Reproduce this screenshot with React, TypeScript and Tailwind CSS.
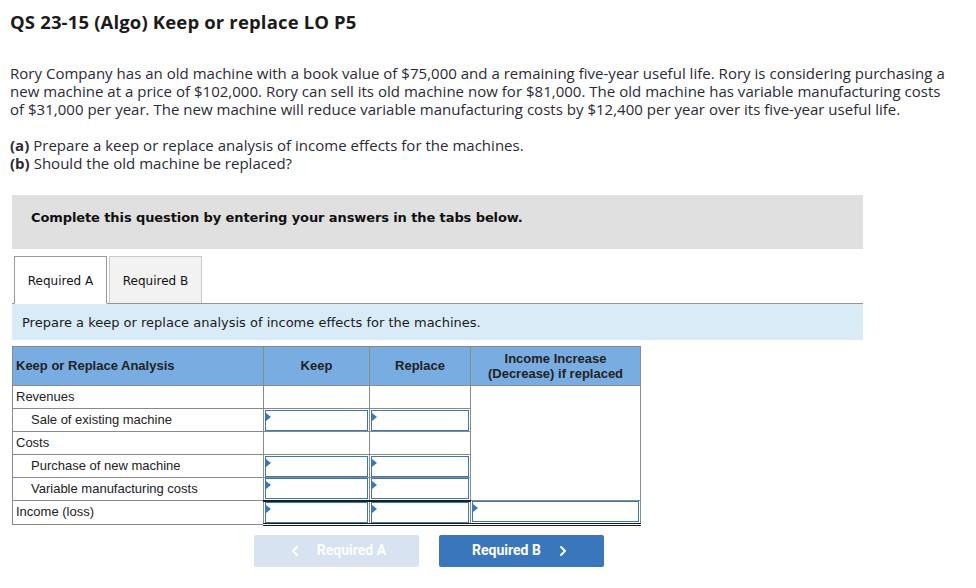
import React from 'react';
import { ChevronLeft, ChevronRight } from 'lucide-react';

function InputBox({ bottom }: { bottom?: 'single' | 'double' }) {
  const edge =
    bottom === 'single'
      ? 'border-b-2 border-b-[#1d1d1d]'
      : bottom === 'double'
      ? 'border-b-[3px] border-b-[#1d1d1d] border-double'
      : '';
  return (
    <td className={`p-0 border border-[#8a8a8a] h-[23px] ${edge}`}>
      <div className="relative h-[21px] mx-px border border-[#3b76ba] bg-white">
        <span className="absolute left-0 top-[2px] w-0 h-0 border-y-[4px] border-y-transparent border-l-[5px] border-l-[#3b76ba]" />
      </div>
    </td>
  );
}

export default function App() {
  const rows = [
    { label: 'Revenues', indent: false, input: false },
    { label: 'Sale of existing machine', indent: true, input: true },
    { label: 'Costs', indent: false, input: false },
    { label: 'Purchase of new machine', indent: true, input: true },
    { label: 'Variable manufacturing costs', indent: true, input: true, single: true },
  ];

  return (
    <div className="w-[976px] h-[588px] bg-white text-[#222] overflow-hidden">
      {/* Heading */}
      <h1 className="pl-[10px] pt-[11px] text-[18.5px] tracking-[0.15px] font-bold leading-[22px] text-[#1b1b1b] font-['Open_Sans',sans-serif]">
        QS 23-15 (Algo) Keep or replace LO P5
      </h1>

      {/* Problem text */}
      <div className="pl-[10px] pt-[31px] text-[15px] tracking-[0.02px] leading-[18px] text-[#2b2b35] font-['Open_Sans',sans-serif] whitespace-nowrap">
        <p>
          Rory Company has an old machine with a book value of $75,000 and a remaining five-year useful life. Rory is considering purchasing a
          <br />
          new machine at a price of $102,000. Rory can sell its old machine now for $81,000. The old machine has variable manufacturing costs
          <br />
          of $31,000 per year. The new machine will reduce variable manufacturing costs by $12,400 per year over its five-year useful life.
        </p>
        <p className="mt-[18px]">
          <b>(a)</b> Prepare a keep or replace analysis of income effects for the machines.
          <br />
          <b>(b)</b> Should the old machine be replaced?
        </p>
      </div>

      <div className="ml-[12px] mt-[23px] w-[851px] font-['DejaVu_Sans',sans-serif]">
        {/* Instruction box */}
        <div className="h-[54px] bg-[#e0e0e0] flex items-center pl-[19px] pb-[8px] text-[13px] font-bold text-[#111] tracking-[-0.1px]">
          Complete this question by entering your answers in the tabs below.
        </div>

        {/* Tabs */}
        <div className="mt-[7px] flex items-end border-b border-[#8f959b] h-[48px]">
          <div className="ml-[2px] w-[93px] h-[48px] -mb-px bg-white border border-[#999] border-b-white flex items-center justify-center pt-[2px] text-[12px] text-[#111]">
            Required A
          </div>
          <div className="ml-[2px] w-[93px] h-[47px] bg-[#f2f2f2] border border-[#c8c8c8] border-b-0 flex items-center justify-center pt-[2px] text-[12px] text-[#111]">
            Required B
          </div>
        </div>

        <div className="h-[36px] bg-[#daebf8] flex items-center pl-[10px] pt-[2px] text-[13px] text-[#1a1a1a]">
          Prepare a keep or replace analysis of income effects for the machines.
        </div>

        {/* Analysis table */}
        <table className="mt-[6px] border-collapse table-fixed w-[628px] text-[13px] text-[#222] font-['Liberation_Sans',Arial,sans-serif]">
          <colgroup>
            <col className="w-[251px]" />
            <col className="w-[106px]" />
            <col className="w-[101px]" />
            <col className="w-[170px]" />
          </colgroup>
          <thead>
            <tr className="h-[39px] bg-[#79ade2]">
              <th className="border border-[#8a8a8a] text-left pl-[3px] font-bold">Keep or Replace Analysis</th>
              <th className="border border-[#8a8a8a] font-bold">Keep</th>
              <th className="border border-[#8a8a8a] font-bold">Replace</th>
              <th className="border border-[#8a8a8a] font-bold leading-[15px]">
                Income Increase
                <br />
                (Decrease) if replaced
              </th>
            </tr>
          </thead>
          <tbody>
            {rows.map((r, i) => (
              <tr key={r.label} className="h-[23px]">
                <td className={`border border-[#8a8a8a] ${r.indent ? 'pl-[18px]' : 'pl-[3px]'} py-0 leading-[22px]`}>
                  {r.label}
                </td>
                {r.input ? (
                  <>
                    <InputBox bottom={r.single ? 'single' : undefined} />
                    <InputBox bottom={r.single ? 'single' : undefined} />
                  </>
                ) : (
                  <>
                    <td className="border border-[#8a8a8a]" />
                    <td className="border border-[#8a8a8a]" />
                  </>
                )}
                {i === 0 && <td rowSpan={5} className="border border-[#8a8a8a] bg-white" />}
              </tr>
            ))}
            <tr className="h-[23px]">
              <td className="border border-[#8a8a8a] pl-[3px] leading-[22px]">Income (loss)</td>
              <InputBox bottom="double" />
              <InputBox bottom="double" />
              <InputBox bottom="double" />
            </tr>
          </tbody>
        </table>

        {/* Navigation buttons */}
        <div className="mt-[9px] ml-[242px] flex gap-[20px] font-['Roboto',sans-serif] text-[14px] font-bold text-white">
          <button className="w-[165px] h-[32px] rounded-[2px] bg-[#d7e3f1] flex items-center justify-center gap-[14px]">
            <ChevronLeft size={16} strokeWidth={3} />
            <span>Required A</span>
          </button>
          <button className="w-[165px] h-[32px] rounded-[2px] bg-[#3a76bb] flex items-center justify-center gap-[14px]">
            <span>Required B</span>
            <ChevronRight size={16} strokeWidth={3} />
          </button>
        </div>
      </div>
    </div>
  );
}
